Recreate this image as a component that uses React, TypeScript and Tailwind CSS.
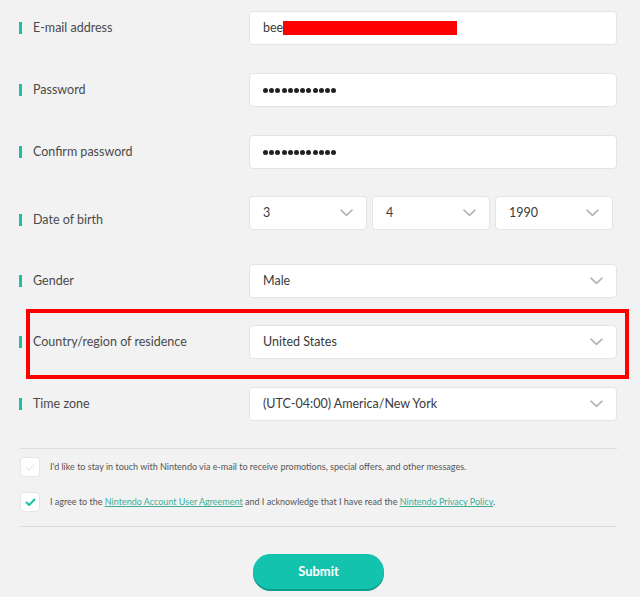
import React from "react"

const font = { fontFamily: "Lato, 'Open Sans', sans-serif" }

function Chevron() {
  return (
    <svg width="13" height="8" viewBox="0 0 13 8" className="shrink-0">
      <path d="M1 1.2 L6.5 6.4 L12 1.2" fill="none" stroke="#b3b3b3" strokeWidth="1.6" strokeLinecap="round" strokeLinejoin="round" />
    </svg>
  )
}

function Label({ text, className = "" }: { text: string; className?: string }) {
  return (
    <div className={"flex w-[249px] shrink-0 items-center pl-[19px] " + className}>
      <span className="mr-[11px] h-[12px] w-[3px] bg-[#1fbfa5]" />
      <span className="text-[12.5px] text-[#4a4a4a]">{text}</span>
    </div>
  )
}

function Box({ children, className = "" }: { children: React.ReactNode; className?: string }) {
  return (
    <div
      className={
        "flex h-[34px] items-center rounded-[4px] border border-[#e4e4e4] bg-white pl-[13px] pr-[13px] text-[12.5px] text-[#3a3a3a] " +
        className
      }
    >
      {children}
    </div>
  )
}

function Select({ value, className = "" }: { value: string; className?: string }) {
  return (
    <Box className={"justify-between " + className}>
      <span>{value}</span>
      <Chevron />
    </Box>
  )
}

function Dots() {
  return (
    <div className="flex gap-[1.2px]">
      {Array.from({ length: 12 }).map((_, i) => (
        <span key={i} className="h-[5px] w-[5px] rounded-full bg-[#222]" />
      ))}
    </div>
  )
}

export default function App() {
  return (
    <div className="h-[597px] w-[640px] overflow-hidden bg-[#f2f2f2]" style={font}>
      <div className="flex flex-col pt-[11px]">
        <div className="flex items-center">
          <Label text="E-mail address" />
          <Box className="w-[368px]">
            <span>bee</span>
            <span className="h-[14px] w-[174px] bg-[#ff0000]" />
          </Box>
        </div>

        <div className="mt-[28px] flex items-center">
          <Label text="Password" />
          <Box className="w-[368px]">
            <Dots />
          </Box>
        </div>

        <div className="mt-[28px] flex items-center">
          <Label text="Confirm password" />
          <Box className="w-[368px]">
            <Dots />
          </Box>
        </div>

        <div className="mt-[27px] flex items-center">
          <Label text="Date of birth" className="pt-[14px]" />
          <div className="flex gap-[5px]">
            <Select value="3" className="w-[118px]" />
            <Select value="4" className="w-[118px]" />
            <Select value="1990" className="w-[118px]" />
          </div>
        </div>

        <div className="mt-[34px] flex items-center">
          <Label text="Gender" />
          <Select value="Male" className="w-[368px]" />
        </div>

        <div className="relative mt-[27px] flex items-center">
          <Label text="Country/region of residence" />
          <Select value="United States" className="w-[368px]" />
          <div className="absolute left-[26px] top-[-16px] h-[70px] w-[603px] border-4 border-[#ff0000]" />
        </div>

        <div className="mt-[28px] flex items-center">
          <Label text="Time zone" />
          <Select value="(UTC-04:00) America/New York" className="w-[368px]" />
        </div>

        <div className="ml-[20px] mt-[27px] h-px w-[597px] bg-[#dcdcdc]" />

        <div className="mt-[8px] flex items-center pl-[20px]">
          <div className="flex h-[20px] w-[20px] items-center justify-center rounded-[4px] border border-[#e6e6e6] bg-white">
            <svg width="11" height="9" viewBox="0 0 11 9">
              <path d="M1.5 4.5 L4.2 7 L9.5 1.5" fill="none" stroke="#eeeeee" strokeWidth="1.6" strokeLinecap="round" strokeLinejoin="round" />
            </svg>
          </div>
          <span className="ml-[10px] text-[9px] text-[#555]">
            I'd like to stay in touch with Nintendo via e-mail to receive promotions, special offers, and other messages.
          </span>
        </div>

        <div className="mt-[15px] flex items-center pl-[20px]">
          <div className="flex h-[20px] w-[20px] items-center justify-center rounded-[4px] border border-[#e6e6e6] bg-white">
            <svg width="11" height="9" viewBox="0 0 11 9">
              <path d="M1.5 4.5 L4.2 7 L9.5 1.5" fill="none" stroke="#1fbfa5" strokeWidth="2" strokeLinecap="round" strokeLinejoin="round" />
            </svg>
          </div>
          <span className="ml-[10px] text-[9px] text-[#555]">
            I agree to the <span className="text-[#3aae99] underline">Nintendo Account User Agreement</span> and I
            acknowledge that I have read the <span className="text-[#3aae99] underline">Nintendo Privacy Policy</span>.
          </span>
        </div>

        <div className="ml-[20px] mt-[14px] h-px w-[597px] bg-[#dcdcdc]" />

        <div className="mt-[27px] flex justify-center">
          <button className="ml-[-3px] h-[35px] w-[131px] rounded-full bg-[#14c3ae] text-[13px] font-bold text-white shadow-[0_2px_0_#0f9c8b]">
            Submit
          </button>
        </div>
      </div>
    </div>
  )
}
